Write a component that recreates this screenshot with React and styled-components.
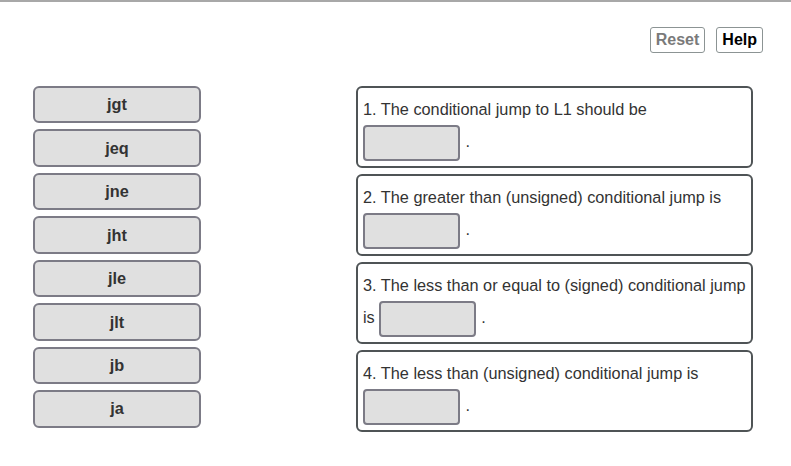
import React from "react";
import styled, { createGlobalStyle } from "styled-components";

const Global = createGlobalStyle`
  html, body { margin: 0; padding: 0; background: #fff; }
  body { font-family: "Liberation Sans", Arial, sans-serif; color: #333; }
`;

const Page = styled.div`
  width: 791px;
  height: 466px;
  box-sizing: border-box;
  border-top: 2px solid #a8a8a8;
  display: flex;
  flex-direction: column;
`;

const Toolbar = styled.div`
  display: flex;
  justify-content: flex-end;
  gap: 11px;
  padding: 25px 28px 0 0;
`;

const ToolButton = styled.button`
  font-family: "Liberation Sans", Arial, sans-serif;
  font-weight: bold;
  font-size: 16px;
  height: 26px;
  padding: 0 5px;
  background: #fff;
  border: 1px solid #8c9494;
  border-radius: 3px;
  color: ${(p) => (p.$muted ? "#7a7a7a" : "#000")};
  line-height: 24px;
`;

const Main = styled.div`
  display: flex;
  padding: 33px 0 0 33px;
`;

const TileColumn = styled.div`
  display: flex;
  flex-direction: column;
  gap: 6.3px;
  width: 168px;
`;

const Tile = styled.div`
  box-sizing: border-box;
  height: 37.2px;
  background: #e0e0e0;
  border: 2px solid #7c7b86;
  border-radius: 6px;
  display: flex;
  align-items: center;
  justify-content: center;
  font-weight: bold;
  font-size: 16.3px;
  color: #333;
`;

const QuestionColumn = styled.div`
  margin-left: 155px;
  width: 397px;
  display: flex;
  flex-direction: column;
  gap: 6px;
`;

const Question = styled.div`
  box-sizing: border-box;
  height: 82px;
  border: 2px solid #4f5456;
  border-radius: 6px;
  padding: 6px 5px 0 5px;
  font-size: 16.3px;
  line-height: 30px;
  color: #333;
`;

const Slot = styled.span`
  display: inline-block;
  box-sizing: border-box;
  width: 97px;
  height: 36px;
  background: #e0e0e0;
  border: 2px solid #7c7b86;
  border-radius: 4px;
  vertical-align: middle;
  margin: 1px 1px 0 ${(p) => (p.$inline ? "4px" : "0")};
`;

const tiles = ["jgt", "jeq", "jne", "jht", "jle", "jlt", "jb", "ja"];

const questions = [
  { text: "1. The conditional jump to L1 should be", lead: "" },
  { text: "2. The greater than (unsigned) conditional jump is", lead: "" },
  { text: "3. The less than or equal to (signed) conditional jump", lead: "is" },
  { text: "4. The less than (unsigned) conditional jump is", lead: "" },
];

export default function App() {
  return (
    <Page>
      <Global />
      <Toolbar>
        <ToolButton $muted>Reset</ToolButton>
        <ToolButton>Help</ToolButton>
      </Toolbar>
      <Main>
        <TileColumn>
          {tiles.map((t) => (
            <Tile key={t}>{t}</Tile>
          ))}
        </TileColumn>
        <QuestionColumn>
          {questions.map((q, i) => (
            <Question key={i}>
              {q.text}
              <br />
              {q.lead}
              <Slot $inline={!!q.lead} /> .
            </Question>
          ))}
        </QuestionColumn>
      </Main>
    </Page>
  );
}
